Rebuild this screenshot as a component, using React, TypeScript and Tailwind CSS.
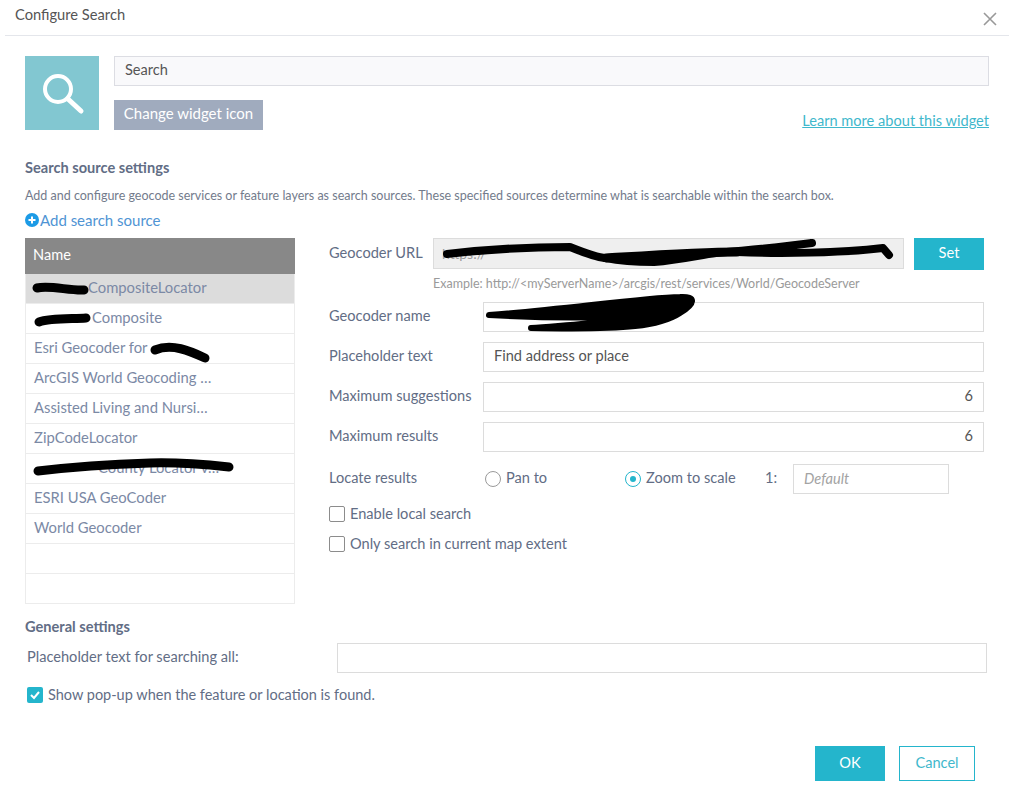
const sources = [
  { label: "CompositeLocator", indent: "pl-[62px]" },
  { label: "Composite", indent: "pl-[66px]" },
  { label: "Esri Geocoder for", indent: "pl-2" },
  { label: "ArcGIS World Geocoding …", indent: "pl-2" },
  { label: "Assisted Living and Nursi…", indent: "pl-2" },
  { label: "ZipCodeLocator", indent: "pl-2" },
  { label: "County Locator v…", indent: "pl-[72px]" },
  { label: "ESRI USA GeoCoder", indent: "pl-2" },
  { label: "World Geocoder", indent: "pl-2" },
  { label: "", indent: "pl-2" },
  { label: "", indent: "pl-2" },
];

function FieldRow({ label, value, right }: { label: string; value: string; right?: boolean }) {
  return (
    <div className="flex h-[30px] items-center">
      <span className="w-[154px] shrink-0 pb-0.5 text-[14.6px] text-[#626d85]">{label}</span>
      <div
        className={`flex h-[30px] flex-1 items-center border border-[#dcdcdc] px-2.5 pb-0.5 text-[14.6px] text-[#555555] ${
          right ? "justify-end" : ""
        }`}
      >
        {value}
      </div>
    </div>
  );
}

function Radio({ checked }: { checked?: boolean }) {
  return (
    <span
      className={`flex h-4 w-4 shrink-0 items-center justify-center rounded-full border ${
        checked ? "border-[#24b5cc]" : "border-[#9a9a9a]"
      }`}
    >
      {checked && <span className="h-1.5 w-1.5 rounded-full bg-[#24b5cc]" />}
    </span>
  );
}

function CheckRow({ label }: { label: string }) {
  return (
    <div className="flex h-4 items-center gap-[5px] text-[14.6px] text-[#626d85]">
      <span className="h-4 w-4 shrink-0 rounded-[2px] border border-[#8c8c8c]" />
      <span>{label}</span>
    </div>
  );
}

export default function App() {
  return (
    <div className="relative h-[790px] w-[1009px] overflow-hidden bg-white font-['Lato',sans-serif]">
      <div className="ml-[5px] flex h-9 items-center justify-between border-b border-[#e4e6eb] pl-2.5 pr-[10px]">
        <span className="pb-1.5 text-[14.7px] text-[#555555]">Configure Search</span>
        <svg width="14" height="14" viewBox="0 0 14 14" className="mr-0.5 mt-0.5">
          <path d="M1 1l12 12M13 1L1 13" stroke="#999" strokeWidth="1.6" fill="none" />
        </svg>
      </div>

      <div className="pl-[25px] pr-5 pt-5">
        <div className="flex gap-[15px]">
          <div className="flex h-[74px] w-[74px] shrink-0 items-center justify-center bg-[#82c7d1]">
            <svg width="74" height="74" viewBox="0 0 74 74" fill="none" stroke="#fff">
              <circle cx="33" cy="33" r="13" strokeWidth="4" />
              <path d="M43 43l13 12" strokeWidth="5" strokeLinecap="round" />
            </svg>
          </div>
          <div className="flex-1">
            <div className="flex h-[30px] items-center border border-[#dcdde3] bg-[#f9f9fb] px-2.5 pb-0.5 text-[14.6px] text-[#555555]">
              Search
            </div>
            <div className="mt-3.5 flex items-end justify-between">
              <button className="h-[30px] w-[149px] bg-[#a0abbe] pb-1 text-[15px] text-white">Change widget icon</button>
              <a className="text-[14.6px] leading-[18px] text-[#3fb8cc] underline">Learn more about this widget</a>
            </div>
          </div>
        </div>

        <h2 className="mt-[29px] text-[14.6px] font-bold leading-[18px] text-[#626d85]">Search source settings</h2>
        <p className="mt-[9px] text-[12.5px] leading-[20px] text-[#737b8c]">
          Add and configure geocode services or feature layers as search sources. These specified sources determine what
          is searchable within the search box.
        </p>
        <div className="mt-1.5 flex h-4 items-center gap-px text-[15px] text-[#4f94d4]">
          <svg width="14" height="14" viewBox="0 0 14 14">
            <circle cx="7" cy="7" r="7" fill="#1c9be6" />
            <path d="M7 3.5v7M3.5 7h7" stroke="#fff" strokeWidth="2" />
          </svg>
          Add search source
        </div>

        <div className="mt-2.5 flex">
          <div className="w-[270px] shrink-0">
            <div className="flex h-9 items-center bg-[#888888] px-2 pb-0.5 text-[14.6px] text-white">Name</div>
            <div className="border-x border-b border-[#ececec]">
              {sources.map((source, i) => (
                <div
                  key={i}
                  className={`flex h-[30px] items-center truncate border-b border-[#ececec] pb-0.5 text-[14.8px] text-[#7b89a5] last:h-[29px] last:border-b-0 ${source.indent} ${
                    i === 0 ? "bg-[#dcdcdc] text-[#6f7c98]" : ""
                  }`}
                >
                  {source.label}
                </div>
              ))}
            </div>
          </div>

          <div className="ml-[34px] w-[655px]">
            <div className="flex h-[32px] items-start">
              <span className="w-[104px] shrink-0 pt-1 text-[14.6px] text-[#626d85]">Geocoder URL</span>
              <div className="flex h-[31px] w-[471px] items-center overflow-hidden border border-[#dcdcdc] bg-[#efefef] px-2 text-[14px] text-[#9a9a9a]">
                https://
              </div>
              <button className="ml-2.5 h-[32px] w-[70px] bg-[#24b5cc] pb-0.5 text-[14.6px] text-white">Set</button>
            </div>
            <p className="ml-[104px] mt-1.5 text-[12.5px] leading-[16px] text-[#9a9a9a]">
              {"Example: http://<myServerName>/arcgis/rest/services/World/GeocodeServer"}
            </p>
            <div className="mt-2.5 flex flex-col gap-2.5">
              <FieldRow label="Geocoder name" value="" />
              <FieldRow label="Placeholder text" value="Find address or place" />
              <FieldRow label="Maximum suggestions" value="6" right />
              <FieldRow label="Maximum results" value="6" right />
            </div>
            <div className="mt-3 flex h-[30px] items-center text-[14.6px] text-[#626d85]">
              <span className="w-[156px] shrink-0 pb-0.5">Locate results</span>
              <div className="flex w-[140px] items-center gap-[5px]">
                <Radio />
                <span className="pb-0.5">Pan to</span>
              </div>
              <div className="flex w-[140px] items-center gap-[5px]">
                <Radio checked />
                <span className="pb-0.5">Zoom to scale</span>
              </div>
              <span className="w-7 pb-0.5">1:</span>
              <div className="flex h-[30px] w-[156px] items-center border border-[#dcdcdc] px-2.5 italic text-[#a3a3a3]">
                Default
              </div>
            </div>
            <div className="mt-3 flex flex-col gap-3.5">
              <CheckRow label="Enable local search" />
              <CheckRow label="Only search in current map extent" />
            </div>
          </div>
        </div>

        <h2 className="mt-[14px] text-[14.6px] font-bold leading-[18px] text-[#626d85]">General settings</h2>
        <div className="mt-[7px] flex h-[30px] items-center pl-0.5">
          <span className="w-[310px] shrink-0 pb-0.5 text-[14.6px] text-[#626d85]">Placeholder text for searching all:</span>
          <div className="h-[30px] w-[650px] border border-[#dcdcdc]" />
        </div>
        <div className="mt-[11px] flex items-center gap-[5px] pl-0.5 text-[14.5px] text-[#626d85]">
          <span className="flex h-4 w-4 items-center justify-center rounded-[2px] bg-[#24b5cc]">
            <svg width="12" height="12" viewBox="0 0 12 12" fill="none">
              <path d="M2 6l3 3 5-6" stroke="#fff" strokeWidth="2" />
            </svg>
          </span>
          Show pop-up when the feature or location is found.
        </div>

        <div className="mt-10 flex justify-end gap-3.5 pr-3.5">
          <button className="h-[35px] w-[70px] bg-[#24b5cc] text-[14.6px] text-white">OK</button>
          <button className="h-[35px] w-[76px] border border-[#24b5cc] text-[14.6px] text-[#3fb8cc]">Cancel</button>
        </div>
      </div>

      {/* marker scribbles drawn over the screenshot */}
      <svg className="pointer-events-none absolute left-0 top-0" width="1009" height="790" fill="none" stroke="#000" strokeLinecap="round" strokeLinejoin="round">
        <path d="M37 288C50 285 70 291 84 290" strokeWidth="9" />
        <path d="M39 322C50 318 72 319 86 318" strokeWidth="9" />
        <path d="M155 350C172 343 190 351 205 358" strokeWidth="9" />
        <path d="M38 471C80 466 120 464 150 463C180 462 210 465 229 467" strokeWidth="9" />
        <path d="M447 254C490 249 530 247 570 247C590 255 600 258 606 258C625 262 640 262 654 262C680 260 700 255 716 253C750 250 790 246 812 243C780 247 755 250 737 252C780 254 840 253 883 248L889 255" strokeWidth="8" />
        <path d="M606 258C640 256 700 252 737 252" strokeWidth="9" />
        <path d="M489 315C560 310 640 298 680 297C697 296 695 304 680 313C660 326 630 330 531 328C580 324 620 322 640 316C600 318 540 318 489 315Z" fill="#000" strokeWidth="6" />
      </svg>
    </div>
  );
}
